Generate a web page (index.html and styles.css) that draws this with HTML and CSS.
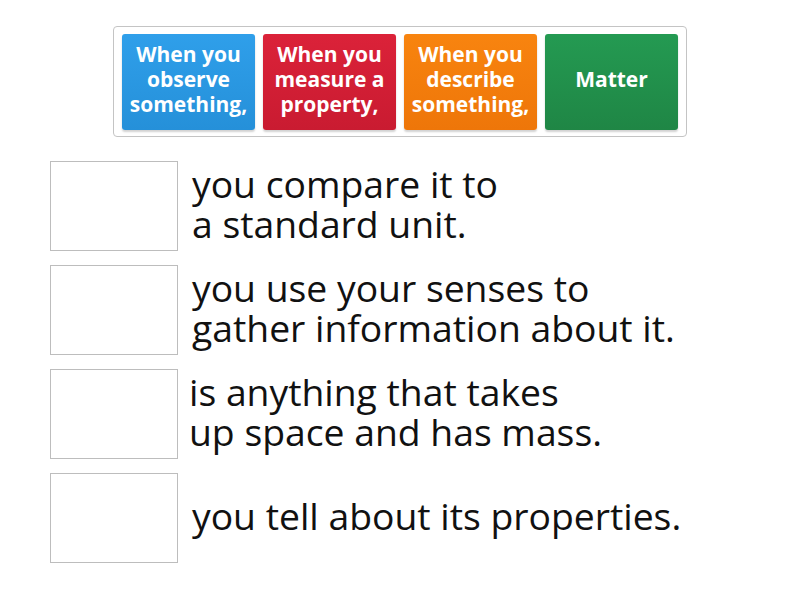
FILE: index.html
```html
<!DOCTYPE html>
<html>
<head>
<meta charset="utf-8">
<link rel="stylesheet" href="styles.css">
</head>
<body>
<div class="page">
  <div class="bank">
    <div class="tile blue">When you observe something,</div>
    <div class="tile red">When you measure a property,</div>
    <div class="tile orange">When you describe something,</div>
    <div class="tile green">Matter</div>
  </div>
  <div class="rows">
    <div class="row"><div class="slot"></div><div class="clue">you compare it to<br>a standard unit.</div></div>
    <div class="row"><div class="slot"></div><div class="clue">you use your senses to<br>gather information about it.</div></div>
    <div class="row"><div class="slot"></div><div class="clue shift">is anything that takes<br>up space and has mass.</div></div>
    <div class="row"><div class="slot"></div><div class="clue">you tell about its properties.</div></div>
  </div>
</div>
</body>
</html>
```
FILE: styles.css
```css
html, body {
  margin: 0;
  padding: 0;
  background: #ffffff;
}
body {
  font-family: "Open Sans", "Noto Sans", sans-serif;
}
.page {
  width: 800px;
  height: 600px;
  padding-top: 26px;
  box-sizing: border-box;
}
.bank {
  width: 556px;
  margin: 0 auto;
  display: flex;
  gap: 8px;
  padding: 7px 8px 6px 8px;
  border: 1px solid #c4c4c4;
  border-radius: 4px;
}
.tile {
  width: 133px;
  height: 96px;
  border-radius: 3px;
  display: flex;
  align-items: center;
  justify-content: center;
  text-align: center;
  color: #ffffff;
  font-weight: 700;
  font-size: 21px;
  line-height: 25px;
  padding: 0 2px 6px;
  box-sizing: border-box;
  box-shadow: 0 2px 2px rgba(0,0,0,0.18);
}
.blue { background: linear-gradient(#2f9fea, #2590d9); }
.red { background: linear-gradient(#db2239, #c91b31); }
.orange { background: linear-gradient(#f8840f, #ee7609); }
.green { background: linear-gradient(#249a52, #1f8645); }
.rows {
  margin-top: 24px;
  padding-left: 50px;
  display: flex;
  flex-direction: column;
  gap: 14px;
}
.row {
  display: flex;
  align-items: center;
  height: 90px;
}
.slot {
  width: 128px;
  height: 90px;
  box-sizing: border-box;
  border: 1px solid #bdbdbd;
  flex: none;
}
.clue {
  margin-left: 14px;
  font-size: 37.3px;
  line-height: 40px;
  color: #111111;
  margin-top: -5px;
}
.clue.shift {
  margin-left: 11px;
}
```
